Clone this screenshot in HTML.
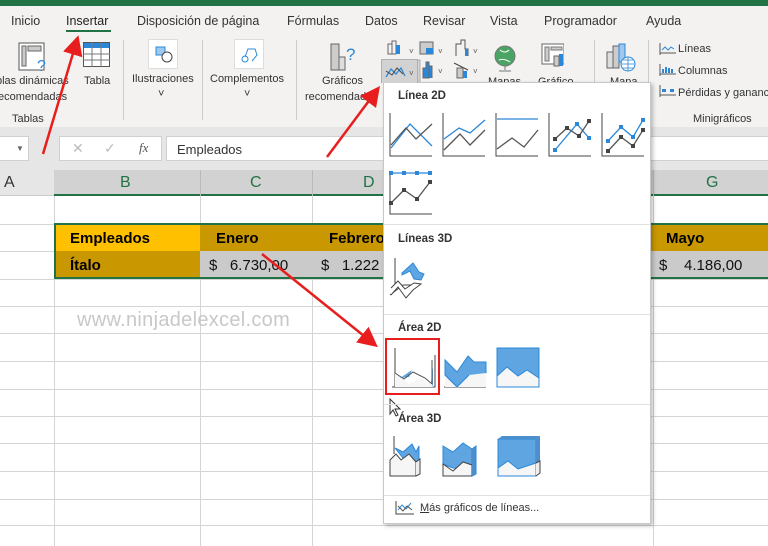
<!DOCTYPE html>
<html><head><meta charset="utf-8"><style>
*{margin:0;padding:0;box-sizing:border-box}
body{width:768px;height:546px;overflow:hidden;background:#fff;font-family:"Liberation Sans",sans-serif;position:relative;color:#333}
.a{position:absolute}
.t{font-size:12.5px;color:#333;white-space:nowrap}
.s{font-size:11px;color:#333;white-space:nowrap}
.vl{position:absolute;width:1px;background:#d4d4d4}
.hl{position:absolute;height:1px;background:#d4d4d4;left:0;width:768px}
.b{font-weight:bold;font-size:15px;color:#000;white-space:nowrap}
.sec{position:absolute;left:398px;font-size:11.5px;font-weight:bold;color:#333}
.sep{position:absolute;left:384px;width:266px;height:1px;background:#e1e1e1}
</style></head><body>
<div class="a" style="left:0;top:0;width:768px;height:6px;background:#217346"></div>
<div class="a" style="left:0;top:6px;width:768px;height:121px;background:#f3f2f1"></div>
<!-- tabs -->
<div class="t a" style="left:11px;top:14px">Inicio</div>
<div class="t a" style="left:66px;top:14px;color:#222">Insertar</div>
<div class="a" style="left:66px;top:30px;width:45px;height:2px;background:#217346"></div>
<div class="t a" style="left:137px;top:14px">Disposición de página</div>
<div class="t a" style="left:287px;top:14px">Fórmulas</div>
<div class="t a" style="left:365px;top:14px">Datos</div>
<div class="t a" style="left:423px;top:14px">Revisar</div>
<div class="t a" style="left:490px;top:14px">Vista</div>
<div class="t a" style="left:544px;top:14px">Programador</div>
<div class="t a" style="left:646px;top:14px">Ayuda</div>
<!-- ribbon -->
<svg class="a" style="left:18px;top:42px" width="32" height="30"><rect x="1" y="1" width="25" height="27" fill="#fff" stroke="#555"/><rect x="4" y="4" width="4" height="20" fill="#ccc" stroke="#666"/><rect x="10" y="4" width="13" height="5" fill="#ccc" stroke="#666"/><text x="19" y="29" font-size="16" fill="#2b88d8" font-family="Liberation Sans">?</text></svg>
<div class="s a" style="left:-4px;top:75px">blas dinámicas</div>
<div class="s a" style="left:-2px;top:91px">ecomendadas</div>
<div class="s a" style="left:12px;top:113px">Tablas</div>
<svg class="a" style="left:83px;top:42px" width="28" height="26"><rect x="0.5" y="0.5" width="26" height="24" fill="#fff" stroke="#555"/><rect x="1" y="1" width="25" height="5" fill="#2b88d8"/><path d="M0 12H27M0 18H27M9 0V25M18 0V25" stroke="#777"/></svg>
<div class="s a" style="left:84px;top:75px">Tabla</div>
<div class="a" style="left:123px;top:40px;width:1px;height:80px;background:#ccc"></div>
<div class="a" style="left:148px;top:39px;width:30px;height:30px;background:#fff;border:1px solid #ddd"></div>
<svg class="a" style="left:154px;top:45px" width="20" height="20"><rect x="2" y="2" width="9" height="8" fill="#9ec8ee" stroke="#2b88d8"/><circle cx="13" cy="12" r="5" fill="#fff" stroke="#444"/></svg>
<div class="s a" style="left:132px;top:73px">Ilustraciones</div>
<div class="s a" style="left:158px;top:88px">˅</div>
<div class="a" style="left:202px;top:40px;width:1px;height:80px;background:#ccc"></div>
<div class="a" style="left:234px;top:39px;width:30px;height:30px;background:#fff;border:1px solid #ddd"></div>
<svg class="a" style="left:240px;top:45px" width="20" height="20"><path d="M5 12L8 4H15L17 10L12 16" fill="none" stroke="#2b88d8"/><circle cx="5" cy="14" r="3" fill="none" stroke="#2b88d8"/></svg>
<div class="s a" style="left:210px;top:73px">Complementos</div>
<div class="s a" style="left:244px;top:88px">˅</div>
<div class="a" style="left:296px;top:40px;width:1px;height:80px;background:#ccc"></div>
<svg class="a" style="left:330px;top:42px" width="32" height="30"><rect x="1" y="2" width="8" height="26" fill="#ccc" stroke="#666"/><rect x="9" y="15" width="6" height="13" fill="#ddd" stroke="#666"/><text x="16" y="18" font-size="17" fill="#2b88d8" font-family="Liberation Sans">?</text></svg>
<div class="s a" style="left:322px;top:75px">Gráficos</div>
<div class="s a" style="left:305px;top:91px">recomendadas</div>
<!-- small chart icons -->
<svg class="a" style="left:384px;top:38px" width="180" height="46">
<g fill="none" stroke="#666"><rect x="4" y="6" width="4" height="10"/><rect x="8" y="3" width="4" height="13"/></g><rect x="12" y="7" width="4" height="9" fill="#2b88d8"/>
<rect x="-1" y="22" width="37" height="24" fill="#d2d2d2" stroke="#b0b0b0"/>
<path d="M2 37L7 29L12 34L17 28L21 36" fill="none" stroke="#2b88d8" stroke-width="1.3"/><path d="M2 31L8 35L13 28L19 34" fill="none" stroke="#444"/>
<text x="25" y="16" font-size="8" fill="#555">˅</text><text x="25" y="36" font-size="8" fill="#555">˅</text>
<rect x="36" y="4" width="13" height="12" fill="#ccc" stroke="#666"/><rect x="42" y="10" width="7" height="6" fill="#2b88d8"/><text x="54" y="16" font-size="8" fill="#555">˅</text>
<path d="M39 40V30H42V24H45V40ZM45 40V28H48V40" fill="#2b88d8" stroke="#666"/><text x="54" y="36" font-size="8" fill="#555">˅</text>
<path d="M72 18V6H77V2H81V11H84V18" fill="none" stroke="#555"/><rect x="81" y="11" width="3" height="7" fill="#2b88d8"/><text x="89" y="16" font-size="8" fill="#555">˅</text>
<path d="M70 25L84 32" stroke="#444"/><rect x="73" y="30" width="6" height="10" fill="#ccc" stroke="#666"/><rect x="79" y="33" width="4" height="7" fill="#2b88d8"/><text x="89" y="36" font-size="8" fill="#555">˅</text>
<circle cx="121" cy="18" r="10" fill="#4aa564" stroke="#777"/><path d="M116 12Q121 16 125 12M115 22Q120 20 126 24" stroke="#fff" fill="none"/><path d="M121 28V32M115 33H127" stroke="#777"/>
<rect x="158" y="6" width="22" height="20" fill="#fff" stroke="#666"/><rect x="161" y="9" width="4" height="14" fill="#ccc" stroke="#777"/><rect x="167" y="9" width="11" height="3" fill="#ccc" stroke="#777"/><rect x="170" y="18" width="5" height="10" fill="#ccc" stroke="#666"/><rect x="175" y="16" width="4" height="12" fill="#2b88d8"/>
</svg>
<div class="s a" style="left:488px;top:76px">Mapas</div>
<div class="s a" style="left:538px;top:76px">Gráfico</div>
<div class="a" style="left:594px;top:40px;width:1px;height:80px;background:#ccc"></div>
<svg class="a" style="left:606px;top:42px" width="34" height="30"><rect x="1" y="10" width="6" height="16" fill="#ddd" stroke="#666"/><rect x="7" y="4" width="6" height="22" fill="#ccc" stroke="#666"/><rect x="13" y="2" width="6" height="18" fill="#9ec8ee" stroke="#2b88d8"/><circle cx="22" cy="22" r="7" fill="#fff" stroke="#2b88d8"/><path d="M15 22H29M22 15V29M17 18H27M17 26H27" stroke="#2b88d8" stroke-width=".8"/></svg>
<div class="s a" style="left:610px;top:76px">Mapa</div>
<div class="a" style="left:648px;top:40px;width:1px;height:80px;background:#ccc"></div>
<svg class="a" style="left:659px;top:42px" width="18" height="60"><g stroke="#555" fill="none"><path d="M1 1V13M1 11H17"/><path d="M1 22V34M1 32H17"/><path d="M1 43V55M1 53H17"/></g><path d="M3 8L6 5L9 8L12 5L15 7" stroke="#2b88d8" fill="none"/><path d="M4 31V27M7 31V25M10 31V26M13 31V27" stroke="#2b88d8" stroke-width="2"/><rect x="3" y="47" width="4" height="3" fill="#2b88d8"/><rect x="11" y="47" width="4" height="3" fill="#2b88d8"/></svg>
<div class="s a" style="left:678px;top:43px">Líneas</div>
<div class="s a" style="left:678px;top:65px">Columnas</div>
<div class="s a" style="left:678px;top:87px">Pérdidas y gananc</div>
<div class="s a" style="left:693px;top:113px">Minigráficos</div>
<!-- formula bar -->
<div class="a" style="left:0;top:127px;width:768px;height:43px;background:#e6e6e6"></div>
<div class="a" style="left:-2px;top:136px;width:31px;height:25px;background:#fff;border:1px solid #d0d0d0"></div>
<div class="a" style="left:16px;top:144px;font-size:8px;color:#666">▼</div>
<div class="a" style="left:59px;top:136px;width:103px;height:25px;background:#fff;border:1px solid #d0d0d0"></div>
<div class="a" style="left:72px;top:140px;font-size:14px;color:#bbb">✕</div>
<div class="a" style="left:104px;top:140px;font-size:14px;color:#bbb">✓</div>
<div class="a" style="left:139px;top:140px;font-size:13px;color:#555;font-style:italic;font-family:'Liberation Serif',serif">fx</div>
<div class="a" style="left:166px;top:136px;width:610px;height:25px;background:#fff;border:1px solid #d0d0d0"></div>
<div class="t a" style="left:177px;top:142px;font-size:13px">Empleados</div>
<!-- column headers -->
<div class="a" style="left:0;top:170px;width:768px;height:26px;background:#e6e6e6;border-bottom:1px solid #ccc"></div>
<div class="a" style="left:54px;top:170px;width:714px;height:26px;background:#d2d2d2;border-bottom:2px solid #217346"></div>
<div class="a" style="left:4px;top:174px;font-size:16px;color:#333">A</div>
<div class="a" style="left:120px;top:174px;font-size:16px;color:#217346">B</div>
<div class="a" style="left:250px;top:174px;font-size:16px;color:#217346">C</div>
<div class="a" style="left:363px;top:174px;font-size:16px;color:#217346">D</div>
<div class="a" style="left:706px;top:174px;font-size:16px;color:#217346">G</div>
<div class="vl" style="left:200px;top:170px;height:26px;background:#bbb"></div>
<div class="vl" style="left:312px;top:170px;height:26px;background:#bbb"></div>
<div class="vl" style="left:653px;top:170px;height:26px;background:#bbb"></div>
<!-- grid -->
<div class="vl" style="left:54px;top:196px;height:350px"></div>
<div class="vl" style="left:200px;top:196px;height:350px"></div>
<div class="vl" style="left:312px;top:196px;height:350px"></div>
<div class="vl" style="left:653px;top:196px;height:350px"></div>
<div class="hl" style="top:224px"></div><div class="hl" style="top:251px"></div><div class="hl" style="top:279px"></div><div class="hl" style="top:306px"></div><div class="hl" style="top:333px"></div><div class="hl" style="top:361px"></div><div class="hl" style="top:389px"></div><div class="hl" style="top:416px"></div><div class="hl" style="top:443px"></div><div class="hl" style="top:471px"></div><div class="hl" style="top:499px"></div><div class="hl" style="top:525px"></div>
<!-- table -->
<div class="a" style="left:55px;top:225px;width:145px;height:26px;background:#ffc000"></div>
<div class="a" style="left:200px;top:225px;width:568px;height:26px;background:#c99700"></div>
<div class="a" style="left:55px;top:251px;width:145px;height:27px;background:#c99700"></div>
<div class="a" style="left:200px;top:251px;width:568px;height:27px;background:#cacaca"></div>
<div class="a" style="left:54px;top:223px;width:720px;height:56px;border:2px solid #217346"></div>
<div class="b a" style="left:70px;top:230px">Empleados</div>
<div class="b a" style="left:216px;top:230px">Enero</div>
<div class="b a" style="left:329px;top:230px">Febrero</div>
<div class="b a" style="left:666px;top:230px">Mayo</div>
<div class="b a" style="left:70px;top:257px">Ítalo</div>
<div class="a" style="left:209px;top:257px;font-size:15px;color:#111">$&nbsp;&nbsp;&nbsp;6.730,00</div>
<div class="a" style="left:321px;top:257px;font-size:15px;color:#111">$&nbsp;&nbsp;&nbsp;1.222</div>
<div class="a" style="left:659px;top:257px;font-size:15px;color:#111">$&nbsp;&nbsp;&nbsp;&nbsp;4.186,00</div>
<div class="a" style="left:77px;top:309px;font-size:20px;color:#c8c8c8;letter-spacing:.3px">www.ninjadelexcel.com</div>
<!-- dropdown -->
<div class="a" style="left:383px;top:82px;width:268px;height:442px;background:#fff;border:1px solid #c8c8c8;box-shadow:2px 2px 4px rgba(0,0,0,.25)"></div>
<div class="a" style="left:381px;top:59px;width:37px;height:24px;background:#d2d2d2;border:1px solid #b0b0b0;border-bottom:none"></div>
<svg class="a" style="left:384px;top:60px" width="34" height="22"><path d="M2 17L7 9L12 14L17 8L21 16" fill="none" stroke="#2b88d8" stroke-width="1.3"/><path d="M2 11L8 15L13 8L19 14" fill="none" stroke="#444"/><text x="25" y="16" font-size="8" fill="#555">˅</text></svg>
<div class="sec" style="top:90px">Línea 2D</div>
<svg class="a" style="left:384px;top:108px" width="266" height="108" fill="none">
<g stroke="#444"><path d="M6 5V48H48M59 5V48H101M112 5V48H154M165 5V48H207M218 5V48H260M6 65V106H48"/></g>
<path d="M7 40L26 16L48 38" stroke="#2b88d8" stroke-width="1.3"/><path d="M7 37L22 20L32 31L48 16" stroke="#555" stroke-width="1.3"/>
<path d="M60 31L75 20L86 25L101 12" stroke="#2b88d8" stroke-width="1.3"/><path d="M60 42L76 26L86 37L101 22" stroke="#555" stroke-width="1.3"/>
<path d="M113 11H154" stroke="#2b88d8" stroke-width="1.3"/><path d="M113 41L128 30L140 39L154 22" stroke="#555" stroke-width="1.3"/>
<path d="M171 42L193 16L205 30" stroke="#2b88d8" stroke-width="1.3"/><path d="M171 31L183 20L195 28L205 13" stroke="#555" stroke-width="1.3"/>
<g fill="#2b88d8"><rect x="169" y="40" width="4" height="4"/><rect x="191" y="14" width="4" height="4"/><rect x="203" y="28" width="4" height="4"/></g>
<g fill="#444"><rect x="169" y="29" width="4" height="4"/><rect x="181" y="18" width="4" height="4"/><rect x="193" y="26" width="4" height="4"/><rect x="203" y="11" width="4" height="4"/></g>
<path d="M224 33L237 19L249 29L259 12" stroke="#2b88d8" stroke-width="1.3"/><path d="M224 43L237 29L249 38L259 22" stroke="#555" stroke-width="1.3"/>
<g fill="#2b88d8"><rect x="222" y="31" width="4" height="4"/><rect x="235" y="17" width="4" height="4"/><rect x="247" y="27" width="4" height="4"/><rect x="257" y="10" width="4" height="4"/></g>
<g fill="#444"><rect x="222" y="41" width="4" height="4"/><rect x="235" y="27" width="4" height="4"/><rect x="247" y="36" width="4" height="4"/><rect x="257" y="20" width="4" height="4"/></g>
<path d="M7 65H47" stroke="#2b88d8" stroke-width="1.3"/><path d="M7 95L20 82L33 91L46 74" stroke="#555" stroke-width="1.3"/>
<g fill="#2b88d8"><rect x="5" y="63" width="4" height="4"/><rect x="18" y="63" width="4" height="4"/><rect x="31" y="63" width="4" height="4"/><rect x="44" y="63" width="4" height="4"/></g>
<g fill="#444"><rect x="5" y="93" width="4" height="4"/><rect x="18" y="80" width="4" height="4"/><rect x="31" y="89" width="4" height="4"/><rect x="44" y="72" width="4" height="4"/></g>
</svg>
<div class="sep" style="top:224px"></div>
<div class="sec" style="top:233px">Líneas 3D</div>
<svg class="a" style="left:388px;top:255px" width="50" height="45" fill="none"><path d="M7 3V32M2 40L15 30H32" stroke="#444"/><path d="M14 18L25 8L31 17L36 19L33 25L26 24L22 16L14 20Z" fill="#5ea5e2" stroke="#2b88d8"/><path d="M3 33L10 26L17 34L26 28L33 29L25 35L18 43L10 32L3 40" stroke="#444" fill="#fff"/></svg>
<div class="sep" style="top:314px"></div>
<div class="sec" style="top:322px">Área 2D</div>
<svg class="a" style="left:384px;top:340px" width="160" height="55">
<path d="M11 47V8M8 47H51V15" stroke="#444" fill="none"/><path d="M11 47V33L25 44L37 38L49 46V17L49 47Z" fill="#f6f6f6"/><path d="M16 38L28 30L25 37Z M47 42L49 27L49 47Z" fill="#5ea5e2"/><path d="M11 33L20 39L29 32L41 38L48 44M48 20V44" stroke="#555" fill="none"/>
<path d="M60 47H102" stroke="#444"/><path d="M61 20L73 32L84 16L90 22H102V33L73 47L61 35Z" fill="#5ea5e2" stroke="#2b88d8"/><path d="M61 35L73 47L85 35L102 33V47H61Z" fill="#f6f6f6"/><path d="M61 35L73 47L85 35" stroke="#2b88d8" fill="none"/>
<path d="M113 47H155V8" stroke="#444" fill="none"/><rect x="113" y="8" width="42" height="39" fill="#5ea5e2" stroke="#2b88d8"/><path d="M113 36L123 27L134 36L143 30L155 38V47H113Z" fill="#f6f6f6" stroke="#2b88d8"/>
</svg>
<div class="a" style="left:385px;top:338px;width:55px;height:57px;border:2px solid #e81e1e"></div>
<svg class="a" style="left:388px;top:398px" width="14" height="20"><path d="M2 1V16L5 12L8 18L10 17L7 11H12Z" fill="#fff" stroke="#333"/></svg>
<div class="sep" style="top:404px"></div>
<div class="sec" style="top:413px">Área 3D</div>
<svg class="a" style="left:388px;top:436px" width="160" height="46">
<path d="M6 0V18" stroke="#444"/><path d="M7 12L15 16L24 8L28 16L31 10V36L20 26L15 22Z" fill="#5ea5e2" stroke="#2b88d8"/><path d="M2 24L8 18L13 24L21 18L28 26V40H2Z" fill="#f6f6f6" stroke="#444"/><path d="M28 26L32 23V38L28 40" fill="#eee" stroke="#444"/>
<path d="M55 10L65 16L75 7L84 13V33L65 32L55 28Z" fill="#5ea5e2" stroke="#2b88d8"/><path d="M55 28L65 35L75 26L84 29V40H55Z" fill="#f6f6f6" stroke="#444"/><path d="M84 13L88 10V38L84 40" fill="#4d8fcc" stroke="#2b88d8"/>
<rect x="110" y="3" width="38" height="34" fill="#5ea5e2" stroke="#2b88d8"/><path d="M110 3L114 0H152L148 3Z" fill="#4d8fcc"/><path d="M148 3L152 0V35L148 38Z" fill="#4d8fcc"/><path d="M110 32L120 25L130 33L148 27V40H110Z" fill="#f6f6f6" stroke="#2b88d8"/><path d="M148 27L152 25V37L148 40" fill="#eee" stroke="#444"/>
</svg>
<div class="sep" style="top:495px"></div>
<svg class="a" style="left:395px;top:500px" width="20" height="16" fill="none"><path d="M1 1V14H19" stroke="#444"/><path d="M3 10L7 5L11 9L16 3" stroke="#2b88d8"/><path d="M3 6L8 11L12 6L17 10" stroke="#555"/></svg>
<div class="a" style="left:420px;top:502px;font-size:11px;color:#333"><u>M</u>ás gráficos de líneas...</div>
<!-- arrows -->
<svg class="a" style="left:0;top:0" width="768" height="546">
<defs><marker id="ar" markerWidth="8" markerHeight="8" refX="6" refY="4" orient="auto"><path d="M0 0L8 4L0 8Z" fill="#e81e1e"/></marker></defs>
<g stroke="#e81e1e" stroke-width="2.5" fill="none" marker-end="url(#ar)">
<path d="M43 154L77 40"/><path d="M327 157L377 90"/><path d="M262 254L374 344"/></g>
</svg>
</body></html>
